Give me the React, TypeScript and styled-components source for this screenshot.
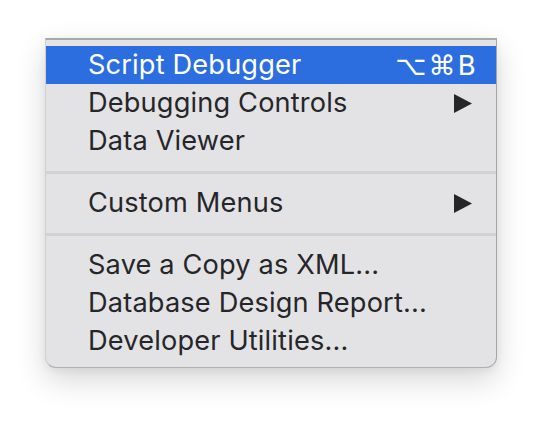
import React from "react";
import styled, { createGlobalStyle } from "styled-components";

const Global = createGlobalStyle`
  html, body { margin: 0; padding: 0; background: #ffffff; }
  body { font-family: Inter, "Noto Sans", "DejaVu Sans", sans-serif; }
`;

const Page = styled.div`
  width: 542px;
  height: 422px;
  padding: 38px 0 0 45px;
  box-sizing: border-box;
`;

const Menu = styled.div`
  width: 452px;
  box-sizing: border-box;
  background: #e3e3e6;
  border-top: 2px solid #a9a9ab;
  border-right: 1px solid #a6a6a8;
  border-bottom: 1px solid #b0b0b2;
  border-left: 1px solid #d0d0d2;
  border-radius: 0 0 11px 11px;
  padding: 6px 0 7px;
  box-shadow: 0 12px 30px rgba(0, 0, 0, 0.16), 0 2px 8px rgba(0, 0, 0, 0.06);
  display: flex;
  flex-direction: column;
`;

const Item = styled.div<{ $active?: boolean }>`
  height: 38px;
  display: flex;
  align-items: center;
  justify-content: space-between;
  padding: 0 20px 0 42px;
  background: ${(p) => (p.$active ? "#2c6ee0" : "transparent")};
  color: ${(p) => (p.$active ? "#ffffff" : "#262628")};
  font-size: 27.2px;
  letter-spacing: 0.16px;
  white-space: nowrap;
`;

const Label = styled.span`
  line-height: 38px;
`;

const Shortcut = styled.span`
  font-family: "DejaVu Sans", Inter, sans-serif;
  font-size: 27px;
  letter-spacing: 2px;
  margin-right: -2px;
`;

const Arrow = styled.svg`
  width: 18px;
  height: 19px;
  margin-right: 4px;
  fill: #262628;
`;

const Separator = styled.div`
  height: 24px;
  display: flex;
  align-items: center;
  &::after {
    content: "";
    flex: 1;
    height: 3px;
    background: #d2d2d5;
  }
`;

const Submenu = () => (
  <Arrow viewBox="0 0 18 19">
    <polygon points="0,0 18,9.5 0,19" />
  </Arrow>
);

export default function App() {
  return (
    <>
      <Global />
      <Page>
        <Menu>
          <Item $active>
            <Label>Script Debugger</Label>
            <Shortcut>⌥⌘B</Shortcut>
          </Item>
          <Item>
            <Label>Debugging Controls</Label>
            <Submenu />
          </Item>
          <Item>
            <Label>Data Viewer</Label>
          </Item>
          <Separator />
          <Item>
            <Label>Custom Menus</Label>
            <Submenu />
          </Item>
          <Separator />
          <Item>
            <Label>Save a Copy as XML...</Label>
          </Item>
          <Item>
            <Label>Database Design Report...</Label>
          </Item>
          <Item>
            <Label>Developer Utilities...</Label>
          </Item>
        </Menu>
      </Page>
    </>
  );
}
